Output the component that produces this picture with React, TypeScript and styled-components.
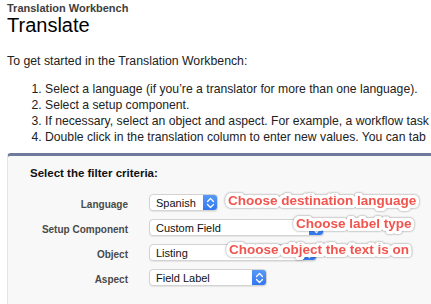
import React from "react";
import styled, { createGlobalStyle } from "styled-components";

const Global = createGlobalStyle`
  html, body { margin: 0; padding: 0; background: #ffffff; }
  body { font-family: "Liberation Sans", Arial, sans-serif; color: #1a1a1a; overflow: hidden; }
`;

const Page = styled.div`
  padding: 2px 0 0 7px;
  width: 431px;
  height: 304px;
  box-sizing: border-box;
  overflow: hidden;
`;

const Crumb = styled.div`
  font-size: 11px;
  font-weight: bold;
  color: #3e3e3c;
  line-height: 12px;
`;

const Title = styled.h1`
  margin: 0;
  font-size: 20px;
  font-weight: normal;
  line-height: 22px;
  color: #000;
`;

const Intro = styled.p`
  margin: 17px 0 0 0;
  font-size: 12.3px;
  line-height: 16px;
  color: #222;
  white-space: nowrap;
`;

const Steps = styled.ol`
  margin: 12px 0 0 0;
  padding-left: 38px;
  font-size: 12.2px;
  line-height: 16px;
  color: #222;
  white-space: nowrap;
`;

const Panel = styled.section`
  margin-top: 8px;
  width: 440px;
  background: #f8f8f8;
  border: 1px solid #e4e4e4;
  border-top: 3px solid #6e7b9b;
  border-radius: 4px 0 0 0;
  padding: 10px 0 20px 22px;
  box-sizing: border-box;
`;

const PanelTitle = styled.h3`
  margin: 0 0 14px 0;
  font-size: 11.5px;
  line-height: 14px;
  font-weight: bold;
  color: #111;
`;

const Form = styled.div`
  display: flex;
  flex-direction: column;
  gap: 8px;
`;

const Row = styled.div`
  position: relative;
  display: grid;
  grid-template-columns: 98px auto;
  column-gap: 21px;
  align-items: center;
  height: 17px;
`;

const Label = styled.span`
  text-align: right;
  font-size: 10px;
  font-weight: bold;
  color: #4a4a4a;
  padding-top: 3px;
`;

const Select = styled.div<{ $w: number }>`
  width: ${(p) => p.$w}px;
  height: 17px;
  box-sizing: border-box;
  display: flex;
  align-items: center;
  background: #fff;
  border: 1px solid #d3d3d3;
  border-radius: 4px;
  box-shadow: 0 1px 1px rgba(0, 0, 0, 0.08);
  font-size: 11px;
  color: #111;
  overflow: hidden;
`;

const SelectText = styled.span`
  flex: 1;
  padding-left: 6px;
  white-space: nowrap;
`;

const Stepper = styled.span`
  width: 15px;
  height: 17px;
  margin: -1px -1px -1px 0;
  border-radius: 0 4px 4px 0;
  background: linear-gradient(#5a9cf8, #2f74ef);
  display: flex;
  align-items: center;
  justify-content: center;
`;

const Note = styled.span<{ $x: number; $y: number }>`
  position: absolute;
  z-index: 2;
  left: ${(p) => p.$x}px;
  top: ${(p) => p.$y}px;
  font-size: 13.5px;
  font-weight: bold;
  color: #f2544e;
  white-space: nowrap;
  line-height: 16px;
  text-shadow:
    3px 0 0 #fff, -3px 0 0 #fff, 0 3px 0 #fff, 0 -3px 0 #fff,
    2px 2px 0 #fff, -2px 2px 0 #fff, 2px -2px 0 #fff, -2px -2px 0 #fff,
    3px 1px 0 #fff, -3px 1px 0 #fff, 3px -1px 0 #fff, -3px -1px 0 #fff,
    1px 3px 0 #fff, -1px 3px 0 #fff, 1px -3px 0 #fff, -1px -3px 0 #fff,
    3px 2px 0 #fff, -3px 2px 0 #fff, 3px -2px 0 #fff, -3px -2px 0 #fff,
    2px 3px 0 #fff, -2px 3px 0 #fff, 2px -3px 0 #fff, -2px -3px 0 #fff;
  filter: drop-shadow(0 0 0.8px rgba(0, 0, 0, 0.45));
`;

function Arrows() {
  return (
    <svg width="9" height="12" viewBox="0 0 9 12" fill="none">
      <path d="M1.5 4.5 L4.5 1.5 L7.5 4.5" stroke="#fff" strokeWidth="1.3" strokeLinecap="round" strokeLinejoin="round" />
      <path d="M1.5 7.5 L4.5 10.5 L7.5 7.5" stroke="#fff" strokeWidth="1.3" strokeLinecap="round" strokeLinejoin="round" />
    </svg>
  );
}

function Dropdown({ value, width }: { value: string; width: number }) {
  return (
    <Select $w={width}>
      <SelectText>{value}</SelectText>
      <Stepper>
        <Arrows />
      </Stepper>
    </Select>
  );
}

export default function App() {
  return (
    <>
      <Global />
      <Page>
        <Crumb>Translation Workbench</Crumb>
        <Title>Translate</Title>
        <Intro>To get started in the Translation Workbench:</Intro>
        <Steps>
          <li>Select a language (if you’re a translator for more than one language).</li>
          <li>Select a setup component.</li>
          <li>If necessary, select an object and aspect. For example, a workflow task</li>
          <li>Double click in the translation column to enter new values. You can tab</li>
        </Steps>
        <Panel>
          <PanelTitle>Select the filter criteria:</PanelTitle>
          <Form>
            <Row>
              <Label>Language</Label>
              <Dropdown value="Spanish" width={69} />
              <Note $x={198} $y={-1}>Choose destination language</Note>
            </Row>
            <Row>
              <Label>Setup Component</Label>
              <Dropdown value="Custom Field" width={175} />
              <Note $x={266} $y={-3}>Choose label type</Note>
            </Row>
            <Row>
              <Label>Object</Label>
              <Dropdown value="Listing" width={168} />
              <Note $x={199} $y={-2}>Choose object the text is on</Note>
            </Row>
            <Row>
              <Label>Aspect</Label>
              <Dropdown value="Field Label" width={118} />
            </Row>
          </Form>
        </Panel>
      </Page>
    </>
  );
}
